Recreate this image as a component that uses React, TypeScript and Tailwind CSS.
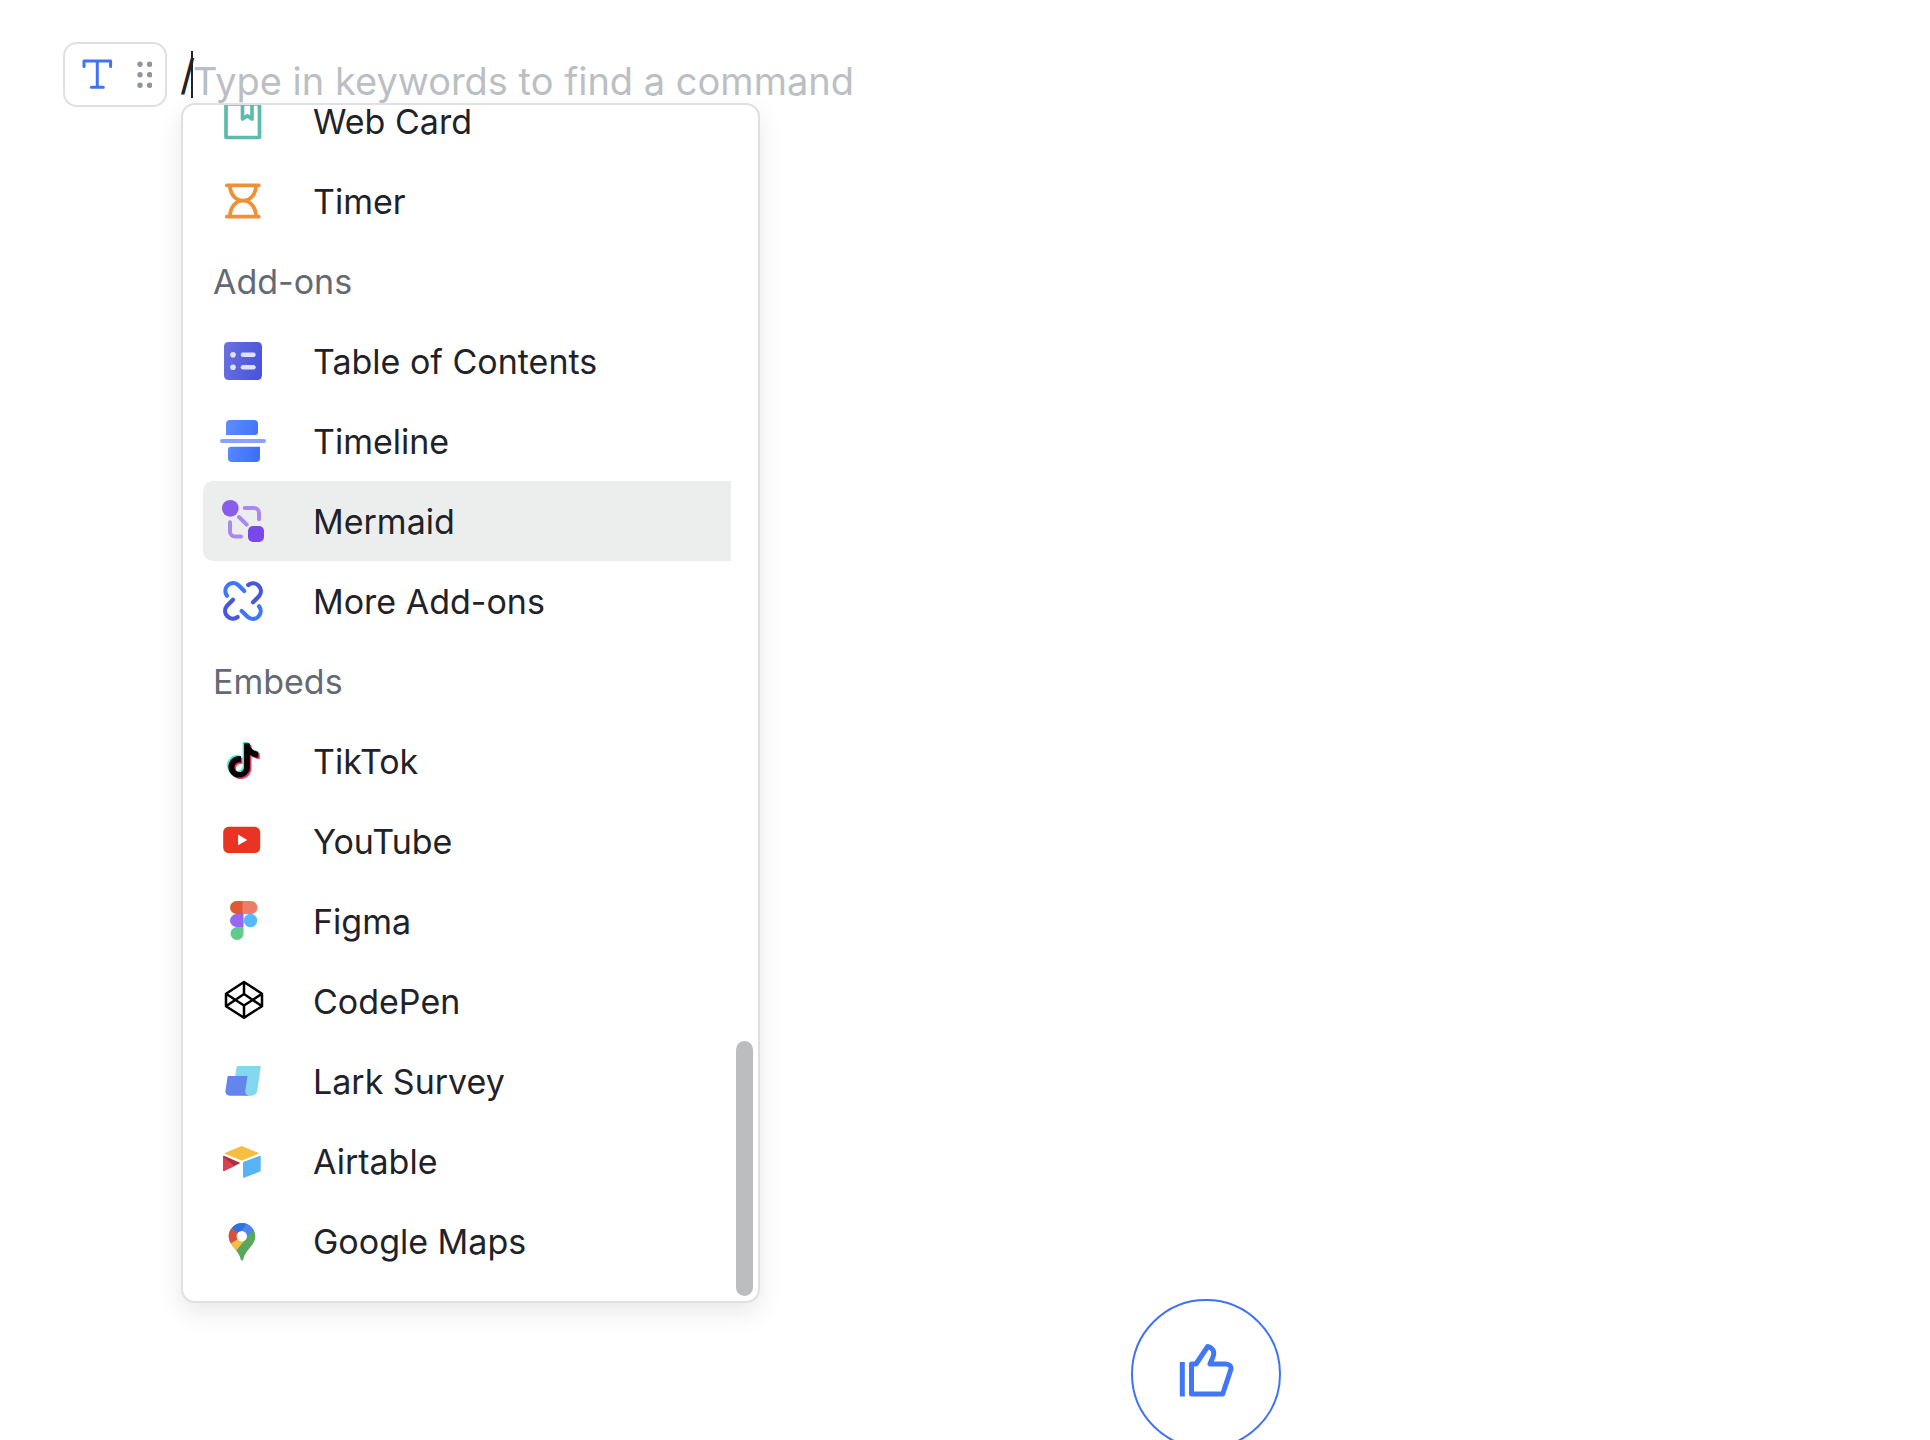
import { useState } from "react";
import type { ReactNode } from "react";

interface Command {
  id: string;
  label: string;
  icon: ReactNode;
}

interface CommandGroup {
  title?: string;
  commands: Command[];
}

const Icon = ({ children }: { children: ReactNode }) => (
  <svg className="size-12 shrink-0" viewBox="0 0 48 48" fill="none" aria-hidden="true">
    {children}
  </svg>
);

const WebCardIcon = () => (
  <Icon>
    <g stroke="#5bbcab" strokeWidth="3.7" strokeLinejoin="round">
      <rect x="7" y="7" width="33.500" height="33.500" rx="0.8" />
      <path d="M23.500 7v15l4.800-3.300L33 22V7" />
    </g>
  </Icon>
);

const TimerIcon = () => (
  <Icon>
    <g stroke="#f09035" strokeWidth="3.8" strokeLinecap="round">
      <path d="M7.8 8.3h32M7.8 39.7h32" />
      <path d="M11 9.5c.6 8.5 6 14.2 13 14.2s12.400-5.700 13-14.200M11 38.500c.6-8.800 6-14.800 13-14.800s12.400 6 13 14.800" />
    </g>
  </Icon>
);

const TableOfContentsIcon = () => (
  <Icon>
    <defs>
      <linearGradient id="toc" x1="5" y1="20" x2="43" y2="28" gradientUnits="userSpaceOnUse">
        <stop stopColor="#686fe0" />
        <stop offset="1" stopColor="#4954da" />
      </linearGradient>
    </defs>
    <rect x="5" y="5" width="38" height="38" rx="4.5" fill="url(#toc)" />
    <g fill="#e0e2fa">
      <circle cx="14" cy="17.7" r="2.8" />
      <circle cx="14" cy="30.3" r="2.8" />
      <rect x="21.7" y="15.5" width="15" height="4.4" rx="2.2" />
      <rect x="21.7" y="28.1" width="15" height="4.4" rx="2.2" />
    </g>
  </Icon>
);

const TimelineIcon = () => (
  <Icon>
    <defs>
      <linearGradient id="timeline" x1="7" y1="20" x2="41" y2="28" gradientUnits="userSpaceOnUse">
        <stop stopColor="#5a8bff" />
        <stop offset="1" stopColor="#3e70f8" />
      </linearGradient>
    </defs>
    <path d="M7 18V7a4 4 0 0 1 4-4h24a4 4 0 0 1 4 4v8a3 3 0 0 1-3 3Z" fill="url(#timeline)" />
    <path d="M41 29.8V41a4 4 0 0 1-4 4H13a4 4 0 0 1-4-4v-8a3.2 3.2 0 0 1 3.200-3.200Z" fill="url(#timeline)" />
    <rect x="1" y="22" width="46" height="4" rx="2" fill="#86a5f8" />
  </Icon>
);

const MermaidIcon = () => (
  <Icon>
    <circle cx="11.3" cy="11.3" r="8.4" fill="#8a5cec" />
    <rect x="29" y="29" width="16" height="16" rx="5" fill="#7a48ea" />
    <path
      d="M25.700 11H35a5 5 0 0 1 5 5v6.300M11 25.300V34.500a5 5 0 0 0 5 5h6M20 20l7.700 7.700"
      stroke="#ab87f0"
      strokeWidth="4"
      strokeLinecap="round"
    />
  </Icon>
);

const MoreAddonsIcon = () => (
  <Icon>
    <defs>
      <path id="hook" d="M8 18.700A7.800 7.800 0 0 1 19 7.800L25.300 14" strokeWidth="4.2" strokeLinecap="round" />
    </defs>
    <use href="#hook" stroke="#3f76fa" />
    <use href="#hook" stroke="#4b56dc" transform="rotate(90 24 24)" />
    <use href="#hook" stroke="#3f76fa" transform="rotate(180 24 24)" />
    <use href="#hook" stroke="#4b56dc" transform="rotate(270 24 24)" />
  </Icon>
);

const TikTokIcon = () => (
  <Icon>
    <defs>
      <path
        id="note"
        d="M12.525.02c1.31-.02 2.61-.01 3.91-.02.08 1.53.63 3.09 1.75 4.17 1.12 1.11 2.7 1.62 4.24 1.79v4.03c-1.44-.05-2.89-.35-4.2-.97-.57-.26-1.1-.59-1.62-.93-.01 2.92.01 5.84-.02 8.75-.08 1.4-.54 2.79-1.35 3.94-1.31 1.92-3.58 3.17-5.91 3.21-1.43.08-2.86-.31-4.08-1.03-2.02-1.19-3.44-3.37-3.65-5.71-.02-.5-.03-1-.01-1.49.18-1.9 1.12-3.72 2.58-4.96 1.66-1.44 3.98-2.13 6.15-1.72.02 1.48-.04 2.96-.04 4.44-.99-.32-2.15-.23-3.02.37-.63.41-1.11 1.04-1.36 1.75-.21.51-.15 1.07-.14 1.61.24 1.64 1.82 3.02 3.5 2.87 1.12-.01 2.19-.66 2.77-1.61.19-.33.4-.67.41-1.06.1-1.79.06-3.57.07-5.36.01-4.03-.01-8.05.02-12.07z"
      />
    </defs>
    <use href="#note" fill="#4fe8e0" transform="translate(5.700 4.900) scale(1.430)" />
    <use href="#note" fill="#f5305c" transform="translate(8.700 7.700) scale(1.430)" />
    <use href="#note" fill="#000" transform="translate(7.200 6.300) scale(1.430)" />
  </Icon>
);

const YouTubeIcon = () => (
  <Icon>
    <rect x="4.2" y="9.8" width="37" height="26.2" rx="5.5" fill="#ea3323" />
    <path d="M19 17.500v10.800l9.300-5.400Z" fill="#fff" />
  </Icon>
);

const FigmaIcon = () => (
  <Icon>
    <path d="M24.500 4h-7a6.500 6.500 0 0 0 0 13h7Z" fill="#df5a32" />
    <path d="M23.500 4H32a6.500 6.500 0 0 1 0 13h-8.500Z" fill="#ed7c69" />
    <path d="M24.500 17h-7a6.500 6.500 0 0 0 0 13h7Z" fill="#9765f7" />
    <circle cx="31.5" cy="23.5" r="6.7" fill="#58b8f9" />
    <path d="M24.500 30h-7a6.500 6.500 0 1 0 7 6.500Z" fill="#60cc88" />
  </Icon>
);

const CodePenIcon = () => (
  <Icon>
    <path
      d="M25 5l18 11.700v12.600L25 40.700 7 29.300V16.700ZM25 5v12M25 40.700V28.500M7 16.700l18 11.800 18-11.800M7 29.300L25 17l18 12.300"
      stroke="#000"
      strokeWidth="2.5"
      strokeLinejoin="round"
    />
  </Icon>
);

const LarkSurveyIcon = () => (
  <Icon>
    <path d="M18.800 9h22.100c.6 0 .9.400.8.900L38.300 33.500a6 6 0 0 1-6 5.200H25L16 20l1.600-10c.1-.6.600-1 1.200-1Z" fill="#84d8ee" />
    <path d="M9.600 19h18.900l-2.300 15c-.3 2.500 1.600 4.700 4.300 4.700H11c-2.900 0-4.900-2.300-4.500-5.200l2-13.500c.1-.6.500-1 1.100-1Z" fill="#6286ee" />
  </Icon>
);

const AirtableIcon = () => (
  <Icon>
    <path d="M6.300 15.800L21.300 9.400a3.500 3.500 0 0 1 2.800 0l15 6.400c.6.300.6.800 0 1.100l-15 6.200a3.500 3.500 0 0 1-2.800 0l-15-6.200c-.6-.3-.6-.8 0-1.100Z" fill="#f5be41" />
    <path d="M4 19.300c0-.6.500-.8 1-.6l15.500 6.800c.5.200.5.700 0 1L5 34c-.5.200-1 0-1-.6Z" fill="#a9303f" />
    <path d="M4 19.500l11.500 9.400L5 34c-.5.200-1 0-1-.6Z" fill="#dc4052" />
    <path d="M24 25.800c0-.6.300-.9.800-1.100l16-6c.6-.2.900 0 .9.600v14.300c0 .5-.3.800-.7 1l-16 6.100c-.6.200-1 0-1-.6Z" fill="#58b3f3" />
  </Icon>
);

const GoogleMapsIcon = () => (
  <Icon>
    <defs>
      <clipPath id="pin">
        <path d="M23 6a13.300 13.300 0 0 1 13.300 13.300c0 9.200-9.800 13.200-12 22.900-.3 1.900-2.300 1.900-2.600 0C19.500 32.500 9.700 28.500 9.700 19.300A13.300 13.300 0 0 1 23 6Z" />
      </clipPath>
    </defs>
    <g clipPath="url(#pin)">
      <rect width="48" height="48" fill="#5aa75c" />
      <path d="M11 27L23 12l6 7-11.500 14.300L8 40Z" fill="#f4be42" />
      <path d="M5 5l8 6.500 10 8.500-12.500 7L4 30Z" fill="#d95040" />
      <path d="M13 11.500L17 0h16l-6 8-5 11Z" fill="#3272de" />
      <path d="M28.500 6L20 17l5 7L37 10 33 0Z" fill="#5085ed" />
    </g>
    <circle cx="22.8" cy="19.3" r="5.2" fill="#fff" />
  </Icon>
);

const groups: CommandGroup[] = [
  {
    commands: [
      { id: "web-card", label: "Web Card", icon: <WebCardIcon /> },
      { id: "timer", label: "Timer", icon: <TimerIcon /> },
    ],
  },
  {
    title: "Add-ons",
    commands: [
      { id: "toc", label: "Table of Contents", icon: <TableOfContentsIcon /> },
      { id: "timeline", label: "Timeline", icon: <TimelineIcon /> },
      { id: "mermaid", label: "Mermaid", icon: <MermaidIcon /> },
      { id: "more", label: "More Add-ons", icon: <MoreAddonsIcon /> },
    ],
  },
  {
    title: "Embeds",
    commands: [
      { id: "tiktok", label: "TikTok", icon: <TikTokIcon /> },
      { id: "youtube", label: "YouTube", icon: <YouTubeIcon /> },
      { id: "figma", label: "Figma", icon: <FigmaIcon /> },
      { id: "codepen", label: "CodePen", icon: <CodePenIcon /> },
      { id: "lark-survey", label: "Lark Survey", icon: <LarkSurveyIcon /> },
      { id: "airtable", label: "Airtable", icon: <AirtableIcon /> },
      { id: "google-maps", label: "Google Maps", icon: <GoogleMapsIcon /> },
    ],
  },
];

const BlockHandle = () => (
  <button
    type="button"
    aria-label="Text block"
    className="flex h-[65px] w-[104px] shrink-0 items-center justify-center gap-[21px] rounded-[14px] border-2 border-[#dee0e3] bg-white"
  >
    <svg className="size-9" viewBox="0 0 36 36" fill="none" aria-hidden="true">
      <path
        d="M5 9.500V4h26.600v5.500M18.300 4v26.300M12.300 30.300h12"
        stroke="#4273f6"
        strokeWidth="3"
        strokeLinecap="round"
        strokeLinejoin="round"
      />
    </svg>
    <svg className="h-7 w-4" viewBox="0 0 16 28" fill="#8f959e" aria-hidden="true">
      {[3.3, 13.8, 24.3].map((y) => (
        <g key={y}>
          <circle cx="4" cy={y} r="2.7" />
          <circle cx="13.6" cy={y} r="2.7" />
        </g>
      ))}
    </svg>
  </button>
);

const CommandMenu = () => {
  const [activeId, setActiveId] = useState("mermaid");

  return (
    <div className="absolute top-[61px] left-px flex max-h-[1200px] w-[579px] justify-between overflow-hidden rounded-[14px] border-2 border-[#dee0e3] bg-white pr-[5px] shadow-[0_10px_25px_rgba(31,35,41,0.1)]">
      {/* list is scrolled to its end, so the first row is cut off */}
      <div className="flex w-[548px] flex-col justify-end pb-5 pl-5">
        {groups.map((group, index) => (
          <section key={group.title ?? index} className="flex shrink-0 flex-col">
            {group.title && (
              <h2 className="flex h-20 items-center pl-[10px] text-[34px] text-[#646a73]">
                {group.title}
              </h2>
            )}
            {group.commands.map((command) => (
              <button
                key={command.id}
                type="button"
                onClick={() => setActiveId(command.id)}
                className={`flex h-20 items-center gap-[46px] rounded-l-[10px] pl-4 text-left text-[34px] text-[#1f2329] ${
                  activeId === command.id ? "bg-[#eceeed]" : "bg-white"
                }`}
              >
                {command.icon}
                {command.label}
              </button>
            ))}
          </section>
        ))}
      </div>
      <div className="mb-[5px] h-[255px] w-[17px] shrink-0 self-end rounded-full bg-[#bbbdbf]" />
    </div>
  );
};

const LikeButton = () => (
  <button
    type="button"
    aria-label="Like"
    className="flex size-[150px] shrink-0 items-center justify-center rounded-full border-2 border-[#3f72f6] bg-white"
  >
    <svg className="size-[60px]" viewBox="0 0 60 60" fill="none" aria-hidden="true">
      <g stroke="#4276f8" strokeWidth="5" strokeLinejoin="round">
        <path d="M6.300 18v34.500" />
        <path d="M15.500 20H20L31.700 2.500c4.500.8 6.800 4.500 5.800 8.500-.8 3.500-2.300 6-3.500 8.900h15.500c4 0 6.200 2.600 5.200 6L46.700 50H15.500Z" />
      </g>
    </svg>
  </button>
);

export default function App() {
  return (
    <main className="flex h-screen flex-col justify-between overflow-hidden bg-white font-['Inter','Liberation_Sans',sans-serif]">
      <div className="flex gap-[13px] pt-[42px] pl-[63px]">
        <BlockHandle />
        <div className="relative flex flex-1 items-start">
          <span className="w-[11px] pt-[10px] text-[42px] leading-[46px] text-[#1f2329]">/</span>
          <span className="mt-[9px] h-[47px] w-[2px] bg-[#1f2329]" />
          <input
            type="text"
            aria-label="Command keywords"
            placeholder="Type in keywords to find a command"
            className="mt-[15px] h-[48px] flex-1 bg-transparent text-[38px] text-[#1f2329] outline-none placeholder:text-[#bbbfc4]"
          />
          <CommandMenu />
        </div>
      </div>
      <footer className="flex h-[141px] items-start justify-center pl-[482px]">
        <LikeButton />
      </footer>
    </main>
  );
}
